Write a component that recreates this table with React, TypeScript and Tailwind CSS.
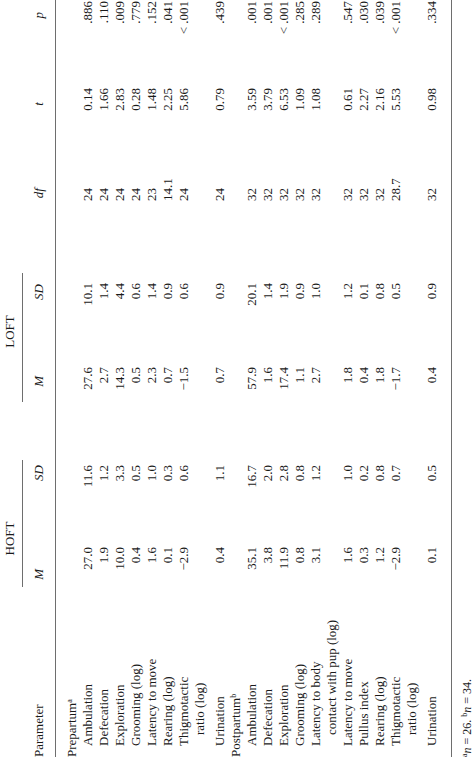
import React from "react";

type Row = {
  label: React.ReactNode;
  indent?: number;
  vals?: string[];
  gap?: boolean;
};

const rows: Row[] = [
  { label: <>Prepartum<sup className="text-[8px]">a</sup></> },
  { label: "Ambulation", indent: 1, vals: ["27.0", "11.6", "27.6", "10.1", "24", "0.14", ".886"] },
  { label: "Defecation", indent: 1, vals: ["1.9", "1.2", "2.7", "1.4", "24", "1.66", ".110"] },
  { label: "Exploration", indent: 1, vals: ["10.0", "3.3", "14.3", "4.4", "24", "2.83", ".009"] },
  { label: "Grooming (log)", indent: 1, vals: ["0.4", "0.5", "0.5", "0.6", "24", "0.28", ".779"] },
  { label: "Latency to move", indent: 1, vals: ["1.6", "1.0", "2.3", "1.4", "23", "1.48", ".152"] },
  { label: "Rearing (log)", indent: 1, vals: ["0.1", "0.3", "0.7", "0.9", "14.1", "2.25", ".041"] },
  { label: "Thigmotactic", indent: 1, vals: ["\u22122.9", "0.6", "\u22121.5", "0.6", "24", "5.86", "< .001"] },
  { label: "ratio (log)", indent: 2 },
  { label: "Urination", indent: 1, gap: true, vals: ["0.4", "1.1", "0.7", "0.9", "24", "0.79", ".439"] },
  { label: <>Postpartum<sup className="text-[8px]">b</sup></> },
  { label: "Ambulation", indent: 1, vals: ["35.1", "16.7", "57.9", "20.1", "32", "3.59", ".001"] },
  { label: "Defecation", indent: 1, vals: ["3.8", "2.0", "1.6", "1.4", "32", "3.79", ".001"] },
  { label: "Exploration", indent: 1, vals: ["11.9", "2.8", "17.4", "1.9", "32", "6.53", "< .001"] },
  { label: "Grooming (log)", indent: 1, vals: ["0.8", "0.8", "1.1", "0.9", "32", "1.09", ".285"] },
  { label: "Latency to body", indent: 1, vals: ["3.1", "1.2", "2.7", "1.0", "32", "1.08", ".289"] },
  { label: "contact with pup (log)", indent: 2 },
  { label: "Latency to move", indent: 1, vals: ["1.6", "1.0", "1.8", "1.2", "32", "0.61", ".547"] },
  { label: "Pullus index", indent: 1, vals: ["0.3", "0.2", "0.4", "0.1", "32", "2.27", ".030"] },
  { label: "Rearing (log)", indent: 1, vals: ["1.2", "0.8", "1.8", "0.8", "32", "2.16", ".039"] },
  { label: "Thigmotactic", indent: 1, vals: ["\u22122.9", "0.7", "\u22121.7", "0.5", "28.7", "5.53", "< .001"] },
  { label: "ratio (log)", indent: 2 },
  { label: "Urination", indent: 1, gap: true, vals: ["0.1", "0.5", "0.4", "0.9", "32", "0.98", ".334"] },
];

// df column is aligned on the decimal point
function DfCell({ v }: { v?: string }) {
  const [a, b] = v ? v.split(".") : ["", ""];
  return (
    <div className="flex w-[120px]">
      <span className="w-[95px] text-right">{a}</span>
      <span className="w-[25px] text-left">{b ? "." + b : ""}</span>
    </div>
  );
}

function DataRow({ row }: { row: Row }) {
  const v = row.vals;
  const pad = row.indent === 2 ? "pl-[22px]" : row.indent === 1 ? "pl-[11px]" : "";
  return (
    <div className={`flex h-[16px] leading-[16px] ${row.gap ? "mt-[4px]" : ""}`}>
      <div className={`w-[150px] whitespace-nowrap ${pad}`}>{row.label}</div>
      <div className="w-[60px] text-right">{v?.[0]}</div>
      <div className="w-[82px] text-right">{v?.[1]}</div>
      <div className="w-[98px] text-right">{v?.[2]}</div>
      <div className="w-[84px] text-right">{v?.[3]}</div>
      <DfCell v={v?.[4]} />
      <div className="w-[75px] text-right">{v?.[5]}</div>
      <div className="w-[88px] pr-[1px] text-right">{v?.[6]}</div>
    </div>
  );
}

export default function App() {
  return (
    <div className="w-[474px] h-[757px] overflow-hidden bg-white">
      {/* the printed table is turned a quarter turn, reading bottom to top */}
      <div
        className="w-[757px] h-[474px] origin-top-left -rotate-90 translate-y-[757px] text-[13px] text-[#1a1a1a]"
        style={{ fontFamily: '"Liberation Serif", "Times New Roman", serif' }}
      >
        {/* group header */}
        <div className="flex h-[23px]">
          <div className="w-[170px]" />
          <div className="w-[127px] border-b-[1.5px] border-[#6e6e6e] pr-[30px] text-center leading-[20px]">HOFT</div>
          <div className="w-[58px]" />
          <div className="w-[129px] border-b-[1.5px] border-[#6e6e6e] pl-[12px] text-center leading-[20px]">LOFT</div>
        </div>

        {/* column labels */}
        <div className="flex h-[33px] items-center border-b-[1.5px] border-[#6e6e6e]">
          <div className="w-[150px]">Parameter</div>
          <div className="w-[60px] pr-[22px] text-right italic">M</div>
          <div className="w-[82px] text-right italic">SD</div>
          <div className="w-[98px] pr-[9px] text-right italic">M</div>
          <div className="w-[84px] pr-[1px] text-right italic">SD</div>
          <div className="w-[120px] pr-[25px] text-right italic">df</div>
          <div className="w-[75px] pr-[14px] text-right italic">t</div>
          <div className="w-[88px] pr-[12px] text-right italic">p</div>
        </div>

        {/* body */}
        <div className="pt-[8px] pb-[11px] border-b-[1.5px] border-[#6e6e6e]">
          {rows.map((r, i) => (
            <DataRow key={i} row={r} />
          ))}
        </div>

        {/* footnote */}
        <div className="pt-[9px] text-[12px] leading-[13px]">
          <sup className="text-[8px]">a</sup>
          <span className="italic">n</span> = 26. <sup className="text-[8px]">b</sup>
          <span className="italic">n</span> = 34.
        </div>
      </div>
    </div>
  );
}
